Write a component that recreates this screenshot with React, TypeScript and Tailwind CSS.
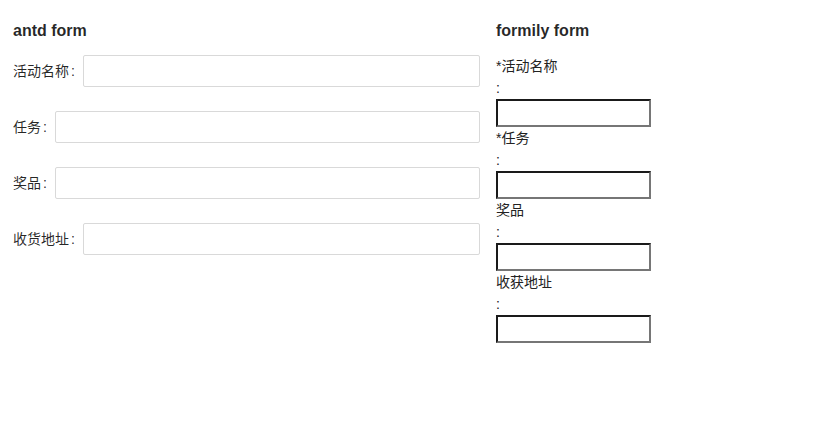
const font = "font-['Liberation_Sans','Noto_Sans_CJK_SC',sans-serif]";

const antdFields = ["活动名称", "任务", "奖品", "收货地址"];
const formilyFields = [
  { label: "活动名称", required: true },
  { label: "任务", required: true },
  { label: "奖品", required: false },
  { label: "收获地址", required: false },
];

function AntdForm() {
  return (
    <div className="w-[467px] shrink-0">
      <h3 className="text-[16px] leading-[24px] font-bold text-[rgba(0,0,0,0.85)] mb-[12px]">antd form</h3>
      <form className="flex flex-col gap-[24px]">
        {antdFields.map((f) => (
          <div key={f} className="flex items-center h-[32px]">
            <label className="text-[14px] leading-[32px] text-[rgba(0,0,0,0.85)] whitespace-nowrap">
              {f}
              <span className="ml-[2px] mr-[8px]">:</span>
            </label>
            <input
              type="text"
              className="flex-1 h-[32px] border border-[#d9d9d9] rounded-[2px] px-[11px] text-[14px] outline-none bg-white"
            />
          </div>
        ))}
      </form>
    </div>
  );
}

function FormilyForm() {
  return (
    <div className="flex-1">
      <h3 className="text-[16px] leading-[24px] font-bold text-[rgba(0,0,0,0.85)] mb-[12px]">formily form</h3>
      <div className="flex flex-col">
        {formilyFields.map((f) => (
          <div key={f.label}>
            <div className="text-[14px] leading-[22px] text-[#222]">
              {f.required ? "*" : ""}
              {f.label}
            </div>
            <div className="text-[14px] leading-[22px] text-[#222]">:</div>
            <input
              type="text"
              className="block w-[155px] h-[28px] border-2 border-t-[#1a1a1a] border-l-[#1a1a1a] border-r-[#767676] border-b-[#767676] bg-white outline-none"
            />
          </div>
        ))}
      </div>
    </div>
  );
}

export default function App() {
  return (
    <div className={`${font} bg-white w-[835px] h-[426px] pl-[13px] pt-[19px] flex gap-[16px]`}>
      <AntdForm />
      <FormilyForm />
    </div>
  );
}
